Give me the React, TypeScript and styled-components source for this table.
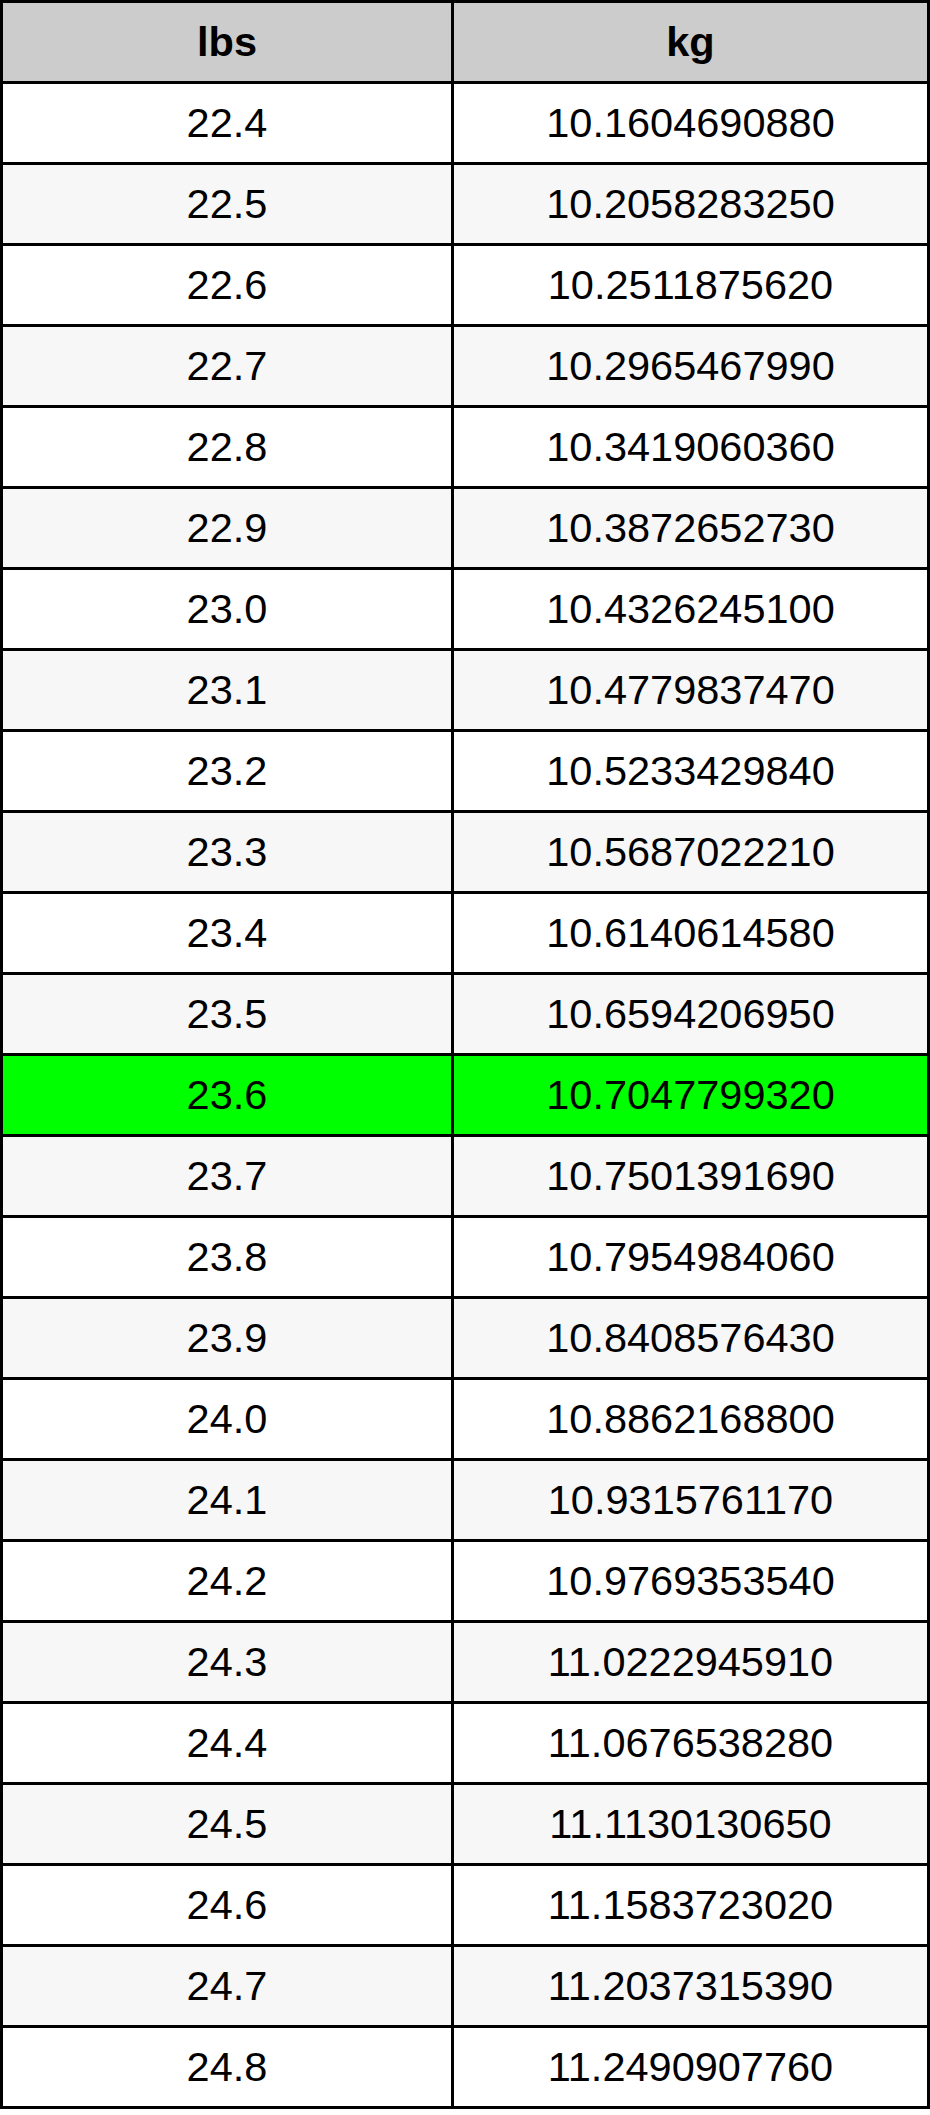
import { createGlobalStyle } from 'styled-components';
import styled from 'styled-components';

const GlobalStyle = createGlobalStyle`
  html, body {
    margin: 0;
    padding: 0;
    background: #ffffff;
  }
  body {
    font-family: "Liberation Sans", Arial, sans-serif;
  }
`;

const rows: [string, string][] = [
  ['22.4', '10.1604690880'],
  ['22.5', '10.2058283250'],
  ['22.6', '10.2511875620'],
  ['22.7', '10.2965467990'],
  ['22.8', '10.3419060360'],
  ['22.9', '10.3872652730'],
  ['23.0', '10.4326245100'],
  ['23.1', '10.4779837470'],
  ['23.2', '10.5233429840'],
  ['23.3', '10.5687022210'],
  ['23.4', '10.6140614580'],
  ['23.5', '10.6594206950'],
  ['23.6', '10.7047799320'],
  ['23.7', '10.7501391690'],
  ['23.8', '10.7954984060'],
  ['23.9', '10.8408576430'],
  ['24.0', '10.8862168800'],
  ['24.1', '10.9315761170'],
  ['24.2', '10.9769353540'],
  ['24.3', '11.0222945910'],
  ['24.4', '11.0676538280'],
  ['24.5', '11.1130130650'],
  ['24.6', '11.1583723020'],
  ['24.7', '11.2037315390'],
  ['24.8', '11.2490907760'],
];

const Table = styled.table`
  width: 930px;
  border-collapse: separate;
  border-spacing: 3px;
  background: #000000;
  table-layout: fixed;
  font-family: "Liberation Sans", Arial, sans-serif;
  font-size: 41.5px;
  color: #000000;
`;

const HeadCell = styled.th`
  height: 78px;
  padding: 0;
  background: #cccccc;
  font-weight: bold;
  text-align: center;
  vertical-align: middle;
`;

const Row = styled.tr<{ $tone: 'white' | 'grey' | 'green' }>`
  background: ${(p) =>
    p.$tone === 'green' ? '#00ff00' : p.$tone === 'grey' ? '#f7f7f7' : '#ffffff'};
`;

const Cell = styled.td`
  height: 78px;
  padding: 0;
  text-align: center;
  vertical-align: middle;
`;

export default function App() {
  return (
    <>
      <GlobalStyle />
      <Table>
        <colgroup>
          <col style={{ width: 448 }} />
          <col style={{ width: 473 }} />
        </colgroup>
        <thead>
          <tr>
            <HeadCell>lbs</HeadCell>
            <HeadCell>kg</HeadCell>
          </tr>
        </thead>
        <tbody>
          {rows.map(([lbs, kg], i) => (
            <Row key={lbs} $tone={lbs === '23.6' ? 'green' : i % 2 === 1 ? 'grey' : 'white'}>
              <Cell>{lbs}</Cell>
              <Cell>{kg}</Cell>
            </Row>
          ))}
        </tbody>
      </Table>
    </>
  );
}
